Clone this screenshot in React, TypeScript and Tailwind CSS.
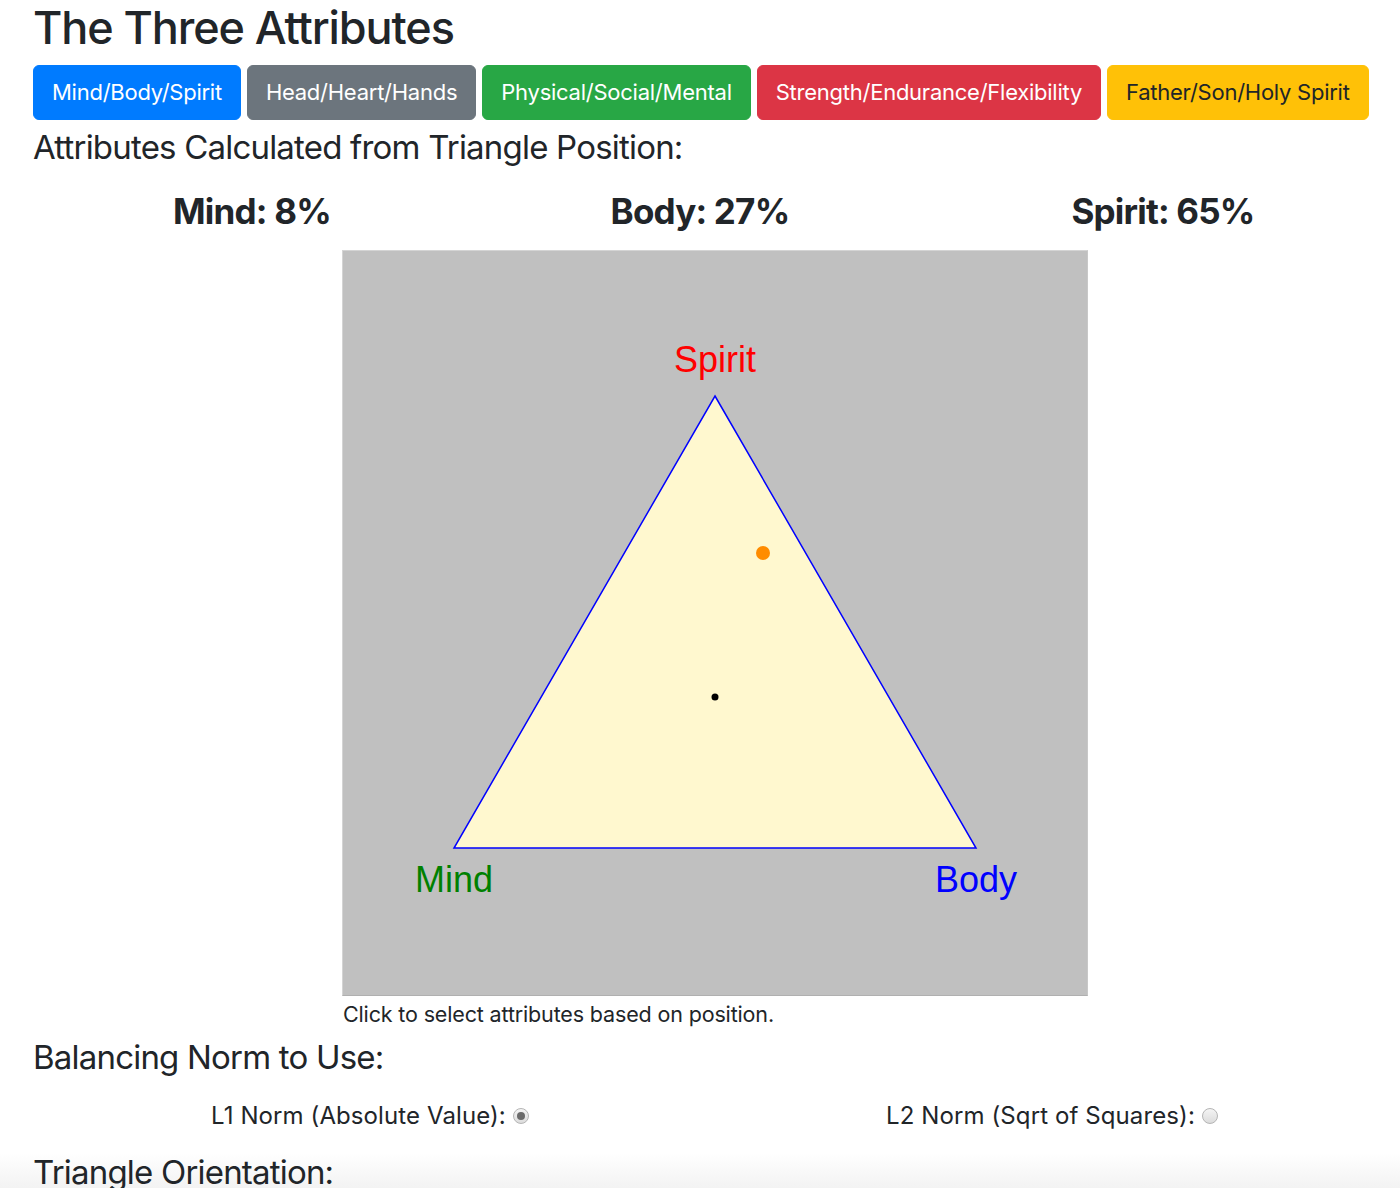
import { useState } from "react"

type Preset = { label: string; className: string }

const presets: Preset[] = [
  { label: "Mind/Body/Spirit", className: "bg-[#007bff] border-[#007bff] text-white" },
  { label: "Head/Heart/Hands", className: "bg-[#6c757d] border-[#6c757d] text-white" },
  { label: "Physical/Social/Mental", className: "bg-[#28a745] border-[#28a745] text-white" },
  { label: "Strength/Endurance/Flexibility", className: "bg-[#dc3545] border-[#dc3545] text-white" },
  { label: "Father/Son/Holy Spirit", className: "bg-[#ffc107] border-[#ffc107] text-[#212529]" },
]

// triangle geometry in canvas pixels
const SIZE = 744
const TOP = { x: 372, y: 145 }
const LEFT = { x: 111, y: 597 }
const RIGHT = { x: 633, y: 597 }

function Radio({ checked, onClick }: { checked: boolean; onClick: () => void }) {
  return (
    <button
      onClick={onClick}
      className="ml-[7px] w-[16px] h-[16px] rounded-full border border-[#b5b5b5] bg-gradient-to-b from-[#f4f4f4] to-[#dcdcdc] flex items-center justify-center"
    >
      {checked && <span className="w-[8px] h-[8px] rounded-full bg-[#6b6b6b]" />}
    </button>
  )
}

export default function App() {
  const [norm, setNorm] = useState<"l1" | "l2">("l1")

  return (
    <div className="relative min-h-[1188px] bg-white text-[#212529] font-['Inter',sans-serif] px-[33px] overflow-hidden">
      {/* bottom fade, painted under the content */}
      <div className="pointer-events-none absolute left-0 right-0 bottom-0 h-[40px] bg-gradient-to-b from-white/0 to-[#f1f1f1]" />

      <h2 className="text-[45px] leading-[56px] font-medium tracking-[-1.1px] mb-[9px]">The Three Attributes</h2>

      {/* Preset buttons */}
      <div className="flex gap-[6px]">
        {presets.map(p => (
          <button
            key={p.label}
            className={`shrink-0 whitespace-nowrap h-[55px] px-[18px] rounded-[6px] border text-[22px] tracking-[-0.25px] ${p.className}`}
          >
            {p.label}
          </button>
        ))}
      </div>

      <h4 className="mt-[6px] text-[33px] leading-[42px] tracking-[-0.8px]">Attributes Calculated from Triangle Position:</h4>

      <div className="mt-[20px] grid grid-cols-[438px_458px_468px] text-center text-[35px] leading-[46px] font-bold tracking-[-0.8px]">
        <div>Mind: 8%</div>
        <div>Body: 27%</div>
        <div>Spirit: 65%</div>
      </div>

      {/* Triangle canvas */}
      <div className="mt-[16px] ml-[309px] w-[746px] border border-t-[#d4d4d4] border-l-[#d4d4d4] border-r-[#c8c8c8] border-b-[#b0b0b0]">
        <svg width={SIZE} height={SIZE} viewBox={`0 0 ${SIZE} ${SIZE}`} className="block">
          <rect width={SIZE} height={SIZE} fill="#c0c0c0" />
          <polygon
            points={`${TOP.x},${TOP.y} ${RIGHT.x},${RIGHT.y} ${LEFT.x},${LEFT.y}`}
            fill="#fff8cf"
            stroke="#0000ff"
            strokeWidth={1.5}
          />
          <g fontFamily="'Liberation Sans', Arial, sans-serif" fontSize={36} textAnchor="middle">
            <text x={TOP.x} y={121} fill="#ff0000">Spirit</text>
            <text x={LEFT.x} y={641} fill="#008000">Mind</text>
            <text x={RIGHT.x} y={641} fill="#0000ff">Body</text>
          </g>
          <circle cx={420} cy={302} r={7} fill="#ff8c00" />
          <circle cx={372} cy={446} r={3.5} fill="#000000" />
        </svg>
      </div>
      <p className="ml-[310px] mt-[5px] text-[21.5px] leading-[26px] tracking-[-0.15px]">Click to select attributes based on position.</p>

      <h4 className="mt-[9px] text-[33px] leading-[42px] tracking-[-0.8px]">Balancing Norm to Use:</h4>

      <div className="mt-[24px] grid grid-cols-[674px_690px] text-[24px] leading-[28px] tracking-[0.1px]">
        <div className="flex items-center justify-center">
          L1 Norm (Absolute Value):
          <Radio checked={norm === "l1"} onClick={() => setNorm("l1")} />
        </div>
        <div className="flex items-center justify-center">
          L2 Norm (Sqrt of Squares):
          <Radio checked={norm === "l2"} onClick={() => setNorm("l2")} />
        </div>
      </div>

      <h4 className="relative mt-[21px] text-[33px] leading-[42px] tracking-[-0.8px]">Triangle Orientation:</h4>
    </div>
  )
}
